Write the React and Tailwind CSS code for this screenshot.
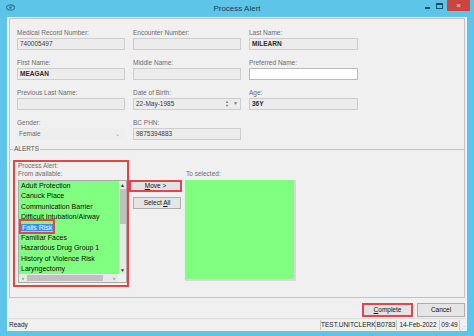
import React from 'react'

function Field({ label, value, bold, white, children }) {
  return (
    <div className="flex flex-col gap-[1px]">
      <div className="h-[8px] leading-[8px] text-[6.5px] text-[#6b6b6b]">{label}</div>
      <div
        className={`h-[12px] border flex items-center px-[2px] text-[6.5px] ${white ? 'bg-white border-[#b9b9b9]' : 'bg-[#ececec] border-[#cdcdcd]'} ${bold ? 'font-bold text-[#2b2b2b]' : 'text-[#3a3a3a]'}`}
      >
        <span className="flex-1">{value}</span>
        {children}
      </div>
    </div>
  )
}

const available = [
  'Adult Protection',
  'Canuck Place',
  'Communication Barrier',
  'Difficult Intubation/Airway',
  'Falls Risk',
  'Familiar Faces',
  'Hazardous Drug Group 1',
  'History of Violence Risk',
  'Laryngectomy',
]

export default function App() {
  return (
    <div className="w-[474px] h-[336px] bg-[#5cc5e8] flex flex-col font-['Liberation_Sans',Arial,sans-serif] overflow-hidden">
      {/* Title bar */}
      <div className="h-[17px] relative flex items-center justify-center">
        <svg className="absolute left-[6px] top-[4px]" width="9" height="7" viewBox="0 0 9 7">
          <ellipse cx="4.5" cy="3.5" rx="4" ry="2.6" fill="none" stroke="#2f7f97" strokeWidth="1.2" />
          <circle cx="4.5" cy="3.5" r="1.3" fill="#2f7f97" />
        </svg>
        <span className="text-[8px] text-[#2b3c48]">Process Alert</span>
        <div className="absolute left-[425px] top-[7px] w-[5px] h-[2px] bg-[#1f4f63]" />
        <div className="absolute left-[436px] top-[3px] w-[7px] h-[6px] border border-[#1f4f63] border-t-2" />
        <div className="absolute left-[447px] top-0 w-[23px] h-[11px] bg-[#c9453d] flex items-center justify-center text-white text-[8px] leading-none">×</div>
      </div>

      {/* Client */}
      <div className="mx-[7px] flex-1 bg-[#f0f0f0] flex flex-col border-l border-r border-[#e6f6fb] mb-[5px]">
        <div className="mt-[1px] mx-[1px] h-[280px] border border-[#c3c3c3] flex flex-col">
          <div className="pt-[10px] pl-[7px] grid grid-cols-[108px_108px_109px] gap-x-[8px] gap-y-[9px]">
            <Field label="Medical Record Number:" value="740005497" />
            <Field label="Encounter Number:" value="" />
            <Field label="Last Name:" value="MILEARN" bold />
            <Field label="First Name:" value="MEAGAN" bold />
            <Field label="Middle Name:" value="" />
            <Field label="Preferred Name:" value="" white />
            <Field label="Previous Last Name:" value="" />
            <Field label="Date of Birth:" value="22-May-1985">
              <span className="flex flex-col text-[4px] leading-[4px] text-[#777] mr-[4px]">
                <span>▲</span>
                <span>▼</span>
              </span>
              <span className="text-[5px] text-[#777]">▼</span>
            </Field>
            <Field label="Age:" value="36Y" bold />
            <div className="flex flex-col gap-[1px]">
              <div className="h-[8px] leading-[8px] text-[6.5px] text-[#6b6b6b]">Gender:</div>
              <div className="h-[12px] bg-[#eeeeee] flex items-center px-[2px] text-[6.5px] text-[#6b6b6b]">
                <span className="flex-1">Female</span>
                <span className="text-[6px] text-[#999] mr-[3px]">⌄</span>
              </div>
            </div>
            <Field label="BC PHN:" value="9875394883" />
          </div>

          {/* ALERTS group line */}
          <div className="mt-[5px] h-[8px] flex items-center">
            <div className="w-[3px] h-[1px] bg-[#c3c3c3]" />
            <span className="px-[1px] text-[6.5px] leading-[8px] text-[#555]">ALERTS</span>
            <div className="flex-1 h-[1px] bg-[#c3c3c3]" />
          </div>

          <div className="mt-[7px] flex items-start">
            {/* Available list, boxed */}
            <div className="ml-[3px] w-[116px] h-[127px] border-2 border-[#e0464a] pl-[3px] flex flex-col">
              <div className="h-[8px] leading-[8px] text-[6.5px] text-[#6b6b6b]">Process Alert:</div>
              <div className="h-[8px] leading-[8px] text-[6.5px] text-[#6b6b6b]">From available:</div>
              <div className="mt-[2px] w-[109px] h-[103px] border border-[#aaaaaa] flex flex-col bg-[#e9e9e9]">
                <div className="flex h-[93px]">
                  <div className="relative w-[100px] bg-[#80ff80] overflow-hidden">
                    {available.map(item => (
                      <div key={item} className="h-[10.4px] leading-[10.4px] text-[7px] text-[#0a0a0a] pl-[2px] whitespace-nowrap">
                        {item === 'Falls Risk' ? (
                          <span className="bg-[#3390f0] text-white px-[1px]">{item}</span>
                        ) : item}
                      </div>
                    ))}
                    <div className="absolute left-0 top-[38px] w-[36px] h-[15px] border-2 border-[#e0464a]" />
                  </div>
                  <div className="w-[7px] flex flex-col items-center bg-[#e8e8e8]">
                    <span className="text-[5px] leading-[8px] text-[#333]">▲</span>
                    <div className="w-[6px] h-[35px] bg-[#c0c0c0]" />
                    <div className="flex-1" />
                    <span className="text-[5px] leading-[8px] text-[#333]">▼</span>
                  </div>
                </div>
                <div className="h-[8px] flex items-center bg-[#e8e8e8]">
                  <span className="w-[8px] text-center text-[6px] leading-none text-[#333]">‹</span>
                  <div className="w-[76px] h-[6px] bg-[#c0c0c0]" />
                  <div className="flex-1" />
                  <span className="w-[8px] text-center text-[6px] leading-none text-[#333]">›</span>
                  <div className="w-[8px] h-full bg-[#f0f0f0]" />
                </div>
              </div>
            </div>

            {/* Buttons */}
            <div className="mt-[20px] flex flex-col">
              <div className="w-[53px] h-[12px] border-2 border-[#e0464a] flex">
                <div className="flex-1 bg-[#e3e3e3] flex items-center justify-center text-[6.5px] text-[#111]">
                  <span><span className="underline">M</span>ove &gt;</span>
                </div>
              </div>
              <div className="ml-[4px] mt-[5px] w-[48px] h-[12px] border border-[#adadad] bg-[#e5e5e5] flex items-center justify-center text-[6.5px] text-[#111]">
                <span>Select <span className="underline">A</span>ll</span>
              </div>
            </div>

            {/* Selected list */}
            <div className="ml-[3px] mt-[10px] flex flex-col">
              <div className="h-[8px] leading-[8px] text-[6.5px] text-[#6b6b6b] pl-[1px]">To selected:</div>
              <div className="mt-[2px] w-[111px] h-[101px] bg-[#80ff80] border-r-2 border-b-2 border-[#d8d8d8]" />
            </div>
          </div>
        </div>

        {/* Dialog buttons */}
        <div className="h-[20px] flex justify-end items-start pt-[5px] pr-[1px] gap-[4px]">
          <div className="w-[51px] h-[14px] border-2 border-[#e0464a] flex">
            <div className="flex-1 bg-[#e3e3e3] flex items-center justify-center text-[6.5px] text-[#111]">
              <span><span className="underline">C</span>omplete</span>
            </div>
          </div>
          <div className="w-[48px] h-[14px] border border-[#adadad] bg-[#e5e5e5] flex items-center justify-center text-[6.5px] text-[#111]">
            Cancel
          </div>
        </div>

        {/* Status bar */}
        <div className="h-[13px] border-t border-[#dcdcdc] flex items-center text-[6.5px] text-[#222] whitespace-nowrap">
          <span className="pl-[1px] flex-1">Ready</span>
          <span className="w-[56px] text-center border-l border-r border-[#c8c8c8]">TEST.UNITCLERK</span>
          <span className="w-[21px] text-center border-r border-[#c8c8c8]">B0783</span>
          <span className="w-[43px] text-center border-r border-[#c8c8c8]">14-Feb-2022</span>
          <span className="w-[20px] text-center border-r border-[#c8c8c8]">09:49</span>
          <span className="w-[6px] text-[5px] text-[#aaa] leading-none self-end">⋰</span>
        </div>
      </div>
    </div>
  )
}
